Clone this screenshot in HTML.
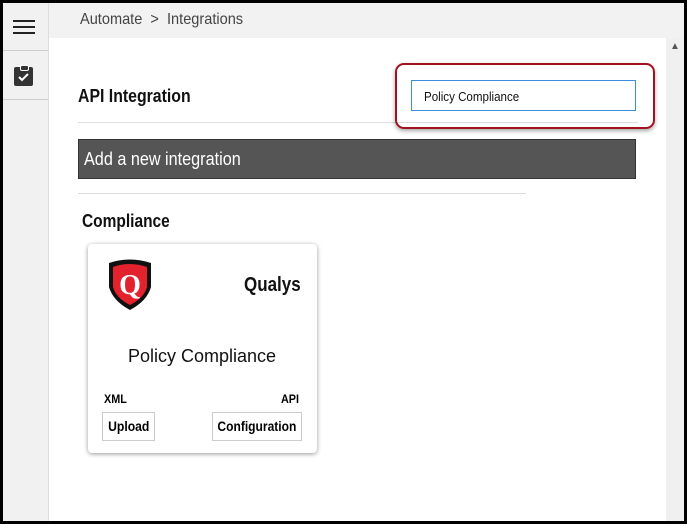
<!DOCTYPE html><html><head><style>
body{margin:0;width:687px;height:524px;overflow:hidden;background:#000;font-family:"Liberation Sans",sans-serif;}
.f{position:absolute;left:3px;top:3px;width:681px;height:518px;background:#fff;overflow:hidden}
.a{position:absolute;white-space:nowrap}
.n{transform-origin:0 50%}
</style></head><body><div class="f">
<div class="a" style="left:0;top:0;width:45px;height:518px;background:#f0f1f0;border-right:1px solid #ddd"></div>
<div class="a" style="left:0;top:47px;width:45px;height:1px;background:#ccc"></div>
<div class="a" style="left:0;top:96px;width:45px;height:1px;background:#ccc"></div>
<div class="a" style="left:10px;top:17px;width:22px;height:2px;background:#222;box-shadow:0 6px 0 #222,0 12px 0 #222"></div>
<div class="a" style="left:11px;top:64px;width:19px;height:19px;background:#333;border-radius:2px"></div>
<div class="a" style="left:17px;top:62px;width:7px;height:4px;background:#333;border:1px solid #fff;border-radius:2px"></div>
<svg class="a" style="left:11px;top:64px" width="19" height="19"><path d="M5 10l3 3 6-6" stroke="#fff" stroke-width="2" fill="none"/></svg>
<div class="a" style="left:46px;top:0;width:635px;height:35px;background:#f1f2f1"></div>
<div class="a n" style="left:77px;top:8px;font-size:16px;color:#444;transform:scaleX(.91)">Automate &nbsp;&gt;&nbsp; Integrations</div>
<div class="a" style="left:663px;top:35px;width:18px;height:483px;background:#f0f0f0"></div>
<div class="a" style="left:667px;top:38px;font-size:10px;color:#555">&#9650;</div>
<div class="a n" style="left:75px;top:83px;font-size:18px;font-weight:bold;color:#111;transform:scaleX(.88)">API Integration</div>
<div class="a" style="left:75px;top:119px;width:560px;height:1px;background:#ddd"></div>
<div class="a" style="left:392px;top:60px;width:256px;height:62px;border:2px solid #a0121e;border-radius:9px;box-shadow:0 2px 4px rgba(0,0,0,.35)"></div>
<div class="a" style="left:408px;top:77px;width:223px;height:29px;border:1px solid #3c8ce0;background:#fff"></div>
<div class="a n" style="left:421px;top:86px;font-size:13px;color:#111;transform:scaleX(.89)">Policy Compliance</div>
<div class="a" style="left:75px;top:136px;width:556px;height:38px;background:#555;border:1px solid #333"></div>
<div class="a n" style="left:81px;top:146px;font-size:18px;color:#fff;transform:scaleX(.9)">Add a new integration</div>
<div class="a" style="left:75px;top:190px;width:448px;height:1px;background:#ddd"></div>
<div class="a n" style="left:79px;top:208px;font-size:18px;font-weight:bold;color:#111;transform:scaleX(.86)">Compliance</div>
<div class="a" style="left:85px;top:241px;width:229px;height:209px;background:#fff;border-radius:4px;box-shadow:0 1px 5px rgba(0,0,0,.4)"></div>
<svg class="a" style="left:104px;top:256px" width="46" height="52"><path d="M2 4Q23-3 44 4V28Q40 42 23 51Q6 42 2 28Z" fill="#111"/><path d="M6 8Q23 2 40 8V28Q37 39 23 46Q9 39 6 28Z" fill="#e2222d"/><text x="23" y="35" font-family="Liberation Serif" font-weight="bold" font-size="28" fill="#fff" text-anchor="middle">Q</text></svg>
<div class="a n" style="left:241px;top:271px;font-size:20px;font-weight:bold;color:#111;transform:scaleX(.85)">Qualys</div>
<div class="a" style="left:125px;top:343px;font-size:18px;color:#111">Policy Compliance</div>
<div class="a n" style="left:101px;top:389px;font-size:12px;font-weight:bold;transform:scaleX(.9)">XML</div>
<div class="a n" style="left:278px;top:389px;font-size:12px;font-weight:bold;transform:scaleX(.9)">API</div>
<div class="a" style="left:99px;top:409px;width:51px;height:27px;border:1px solid #ccc;font-size:14px;font-weight:bold;text-align:center;line-height:27px"><span style="display:inline-block;transform:scaleX(.87)">Upload</span></div>
<div class="a" style="left:209px;top:409px;width:88px;height:27px;border:1px solid #ccc;font-size:14px;font-weight:bold;text-align:center;line-height:27px"><span style="display:inline-block;transform:scaleX(.86);margin:0 -8px">Configuration</span></div>
</div></body></html>
